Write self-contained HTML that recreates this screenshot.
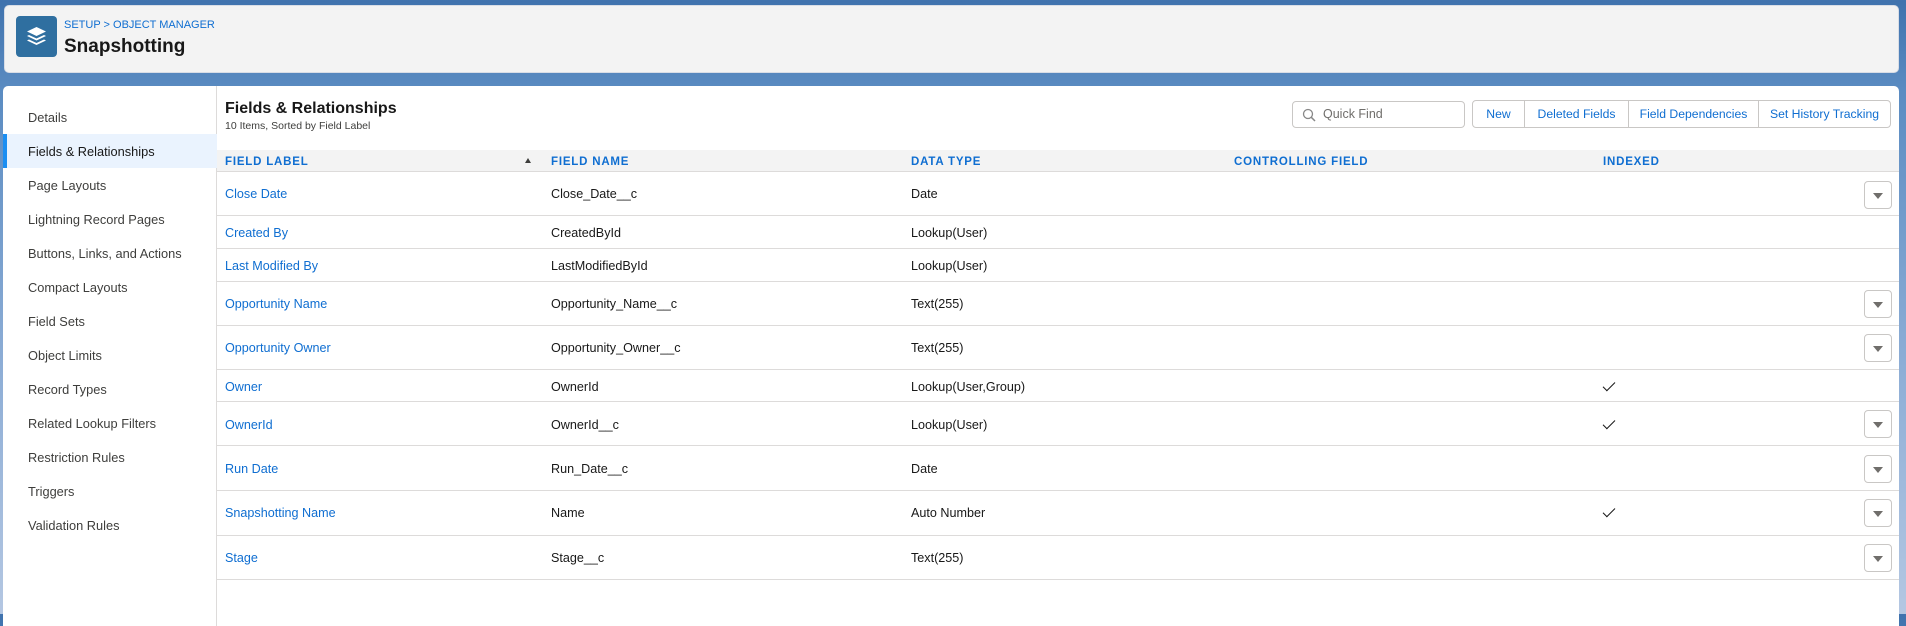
<!DOCTYPE html>
<html><head><meta charset="utf-8"><style>
*{box-sizing:border-box;margin:0;padding:0}
body{width:1906px;height:614px;overflow:hidden;font-family:"Liberation Sans",sans-serif;background:linear-gradient(180deg,#3f72ad 0%,#5b8cc2 15%,#8eaed6 60%,#b4c7e2 100%);position:relative;color:#181818}
.abs{position:absolute}
.hdr{left:4px;top:5px;width:1895px;height:68px;background:#f3f3f3;border-radius:5px;border:1px solid #d8dde6}
.icon{left:16px;top:16px;width:41px;height:41px;background:#2f6fa0;border-radius:4px}
.panel{left:3px;top:86px;width:1896px;height:540px;background:#fff;border-radius:5px 5px 0 0}
.side{left:3px;top:86px;width:214px;height:540px;border-right:1px solid #dddbda}
.si{position:absolute;left:28px;font-size:12.8px;color:#3e3e3c}
.act{left:3px;top:134px;width:214px;height:34px;background:#eaf3fe;border-left:4px solid #1b8ef2}
.thead{left:217px;top:150px;width:1682px;height:22px;background:#f3f3f3;border-bottom:1px solid #dddbda}
.th{position:absolute;top:156px;font-size:11.5px;font-weight:bold;color:#0f6ed1;letter-spacing:0.8px}
.row{position:absolute;left:217px;width:1682px;border-bottom:1px solid #dddbda}
.c{position:absolute;font-size:12.6px}
.lk{color:#0f6ed1}
.dd{position:absolute;left:1864px;width:28px;height:28px;border:1px solid #c9c7c5;border-radius:4px;background:#fff}
.dd:after{content:"";position:absolute;left:8px;top:11px;border-left:5px solid transparent;border-right:5px solid transparent;border-top:6px solid #706e6b}
.chk{position:absolute;left:1603px;width:12px;height:6px;border-left:1.6px solid #181818;border-bottom:1.6px solid #181818;transform:rotate(-45deg)}
.btn{position:absolute;top:100px;height:28px;border:1px solid #c9c7c5;background:#fff;font-size:12.2px;color:#0f6ed1;text-align:center;line-height:26px}
</style></head><body>
<div class="abs hdr"></div>
<div class="abs icon"><svg width="41" height="41" viewBox="0 0 41 41"><g fill="#fff"><path d="M20.5 11 L30 15.5 L20.5 20 L11 15.5Z"/><path d="M13 19 L20.5 22.5 L28 19 L30 20 L20.5 24.5 L11 20Z"/><path d="M13 23.5 L20.5 27 L28 23.5 L30 24.5 L20.5 29 L11 24.5Z"/></g></svg></div>
<div class="abs" style="left:64px;top:19px;font-size:11px;color:#0f6ed1">SETUP &gt; OBJECT MANAGER</div>
<div class="abs" style="left:64px;top:36px;font-size:19px;font-weight:bold;color:#181818">Snapshotting</div>
<div class="abs panel"></div>
<div class="abs side"></div>
<div class="abs act"></div>
<div class="si" style="top:110px">Details</div>
<div class="si" style="top:144px;color:#181818">Fields &amp; Relationships</div>
<div class="si" style="top:178px">Page Layouts</div>
<div class="si" style="top:212px">Lightning Record Pages</div>
<div class="si" style="top:246px">Buttons, Links, and Actions</div>
<div class="si" style="top:280px">Compact Layouts</div>
<div class="si" style="top:314px">Field Sets</div>
<div class="si" style="top:348px">Object Limits</div>
<div class="si" style="top:382px">Record Types</div>
<div class="si" style="top:416px">Related Lookup Filters</div>
<div class="si" style="top:450px">Restriction Rules</div>
<div class="si" style="top:484px">Triggers</div>
<div class="si" style="top:518px">Validation Rules</div>
<div class="abs" style="left:225px;top:100px;font-size:16px;font-weight:bold">Fields &amp; Relationships</div>
<div class="abs" style="left:225px;top:120px;font-size:10.5px;color:#3e3e3c">10 Items, Sorted by Field Label</div>
<div class="abs" style="left:1292px;top:101px;width:173px;height:27px;border:1px solid #c9c7c5;border-radius:4px;background:#fff"><svg class="abs" style="left:9px;top:6px" width="14" height="14" viewBox="0 0 14 14"><circle cx="6" cy="6" r="4.5" fill="none" stroke="#888" stroke-width="1.3"/><path d="M9.3 9.3 L13 13" stroke="#888" stroke-width="1.5"/></svg><span class="abs" style="left:30px;top:5px;font-size:12.5px;color:#706e6b">Quick Find</span></div>
<div class="btn" style="left:1472px;width:53px;border-radius:4px 0 0 4px">New</div>
<div class="btn" style="left:1524px;width:105px;">Deleted Fields</div>
<div class="btn" style="left:1628px;width:131px;">Field Dependencies</div>
<div class="btn" style="left:1758px;width:133px;border-radius:0 4px 4px 0">Set History Tracking</div>
<div class="abs thead"></div>
<div class="th" style="left:225px">FIELD LABEL</div>
<div class="abs" style="left:525px;top:158px;border-left:3.5px solid transparent;border-right:3.5px solid transparent;border-bottom:5px solid #3e3e3c"></div>
<div class="th" style="left:551px">FIELD NAME</div>
<div class="th" style="left:911px">DATA TYPE</div>
<div class="th" style="left:1234px">CONTROLLING FIELD</div>
<div class="th" style="left:1603px">INDEXED</div>

<div class="row" style="top:172px;height:44px"></div>
<div class="c lk" style="left:225px;top:187px">Close Date</div><div class="c" style="left:551px;top:187px">Close_Date__c</div><div class="c" style="left:911px;top:187px">Date</div><div class="dd" style="top:181px"></div>

<div class="row" style="top:216px;height:33px"></div>
<div class="c lk" style="left:225px;top:226px">Created By</div><div class="c" style="left:551px;top:226px">CreatedById</div><div class="c" style="left:911px;top:226px">Lookup(User)</div>

<div class="row" style="top:249px;height:33px"></div>
<div class="c lk" style="left:225px;top:259px">Last Modified By</div><div class="c" style="left:551px;top:259px">LastModifiedById</div><div class="c" style="left:911px;top:259px">Lookup(User)</div>

<div class="row" style="top:282px;height:44px"></div>
<div class="c lk" style="left:225px;top:297px">Opportunity Name</div><div class="c" style="left:551px;top:297px">Opportunity_Name__c</div><div class="c" style="left:911px;top:297px">Text(255)</div><div class="dd" style="top:290px"></div>

<div class="row" style="top:326px;height:44px"></div>
<div class="c lk" style="left:225px;top:341px">Opportunity Owner</div><div class="c" style="left:551px;top:341px">Opportunity_Owner__c</div><div class="c" style="left:911px;top:341px">Text(255)</div><div class="dd" style="top:334px"></div>

<div class="row" style="top:370px;height:32px"></div>
<div class="c lk" style="left:225px;top:380px">Owner</div><div class="c" style="left:551px;top:380px">OwnerId</div><div class="c" style="left:911px;top:380px">Lookup(User,Group)</div><div class="chk" style="top:382px"></div>

<div class="row" style="top:402px;height:44px"></div>
<div class="c lk" style="left:225px;top:418px">OwnerId</div><div class="c" style="left:551px;top:418px">OwnerId__c</div><div class="c" style="left:911px;top:418px">Lookup(User)</div><div class="chk" style="top:420px"></div><div class="dd" style="top:410px"></div>

<div class="row" style="top:446px;height:45px"></div>
<div class="c lk" style="left:225px;top:462px">Run Date</div><div class="c" style="left:551px;top:462px">Run_Date__c</div><div class="c" style="left:911px;top:462px">Date</div><div class="dd" style="top:455px"></div>

<div class="row" style="top:491px;height:45px"></div>
<div class="c lk" style="left:225px;top:506px">Snapshotting Name</div><div class="c" style="left:551px;top:506px">Name</div><div class="c" style="left:911px;top:506px">Auto Number</div><div class="chk" style="top:508px"></div><div class="dd" style="top:499px"></div>

<div class="row" style="top:536px;height:44px"></div>
<div class="c lk" style="left:225px;top:551px">Stage</div><div class="c" style="left:551px;top:551px">Stage__c</div><div class="c" style="left:911px;top:551px">Text(255)</div><div class="dd" style="top:544px"></div>
</body></html>
